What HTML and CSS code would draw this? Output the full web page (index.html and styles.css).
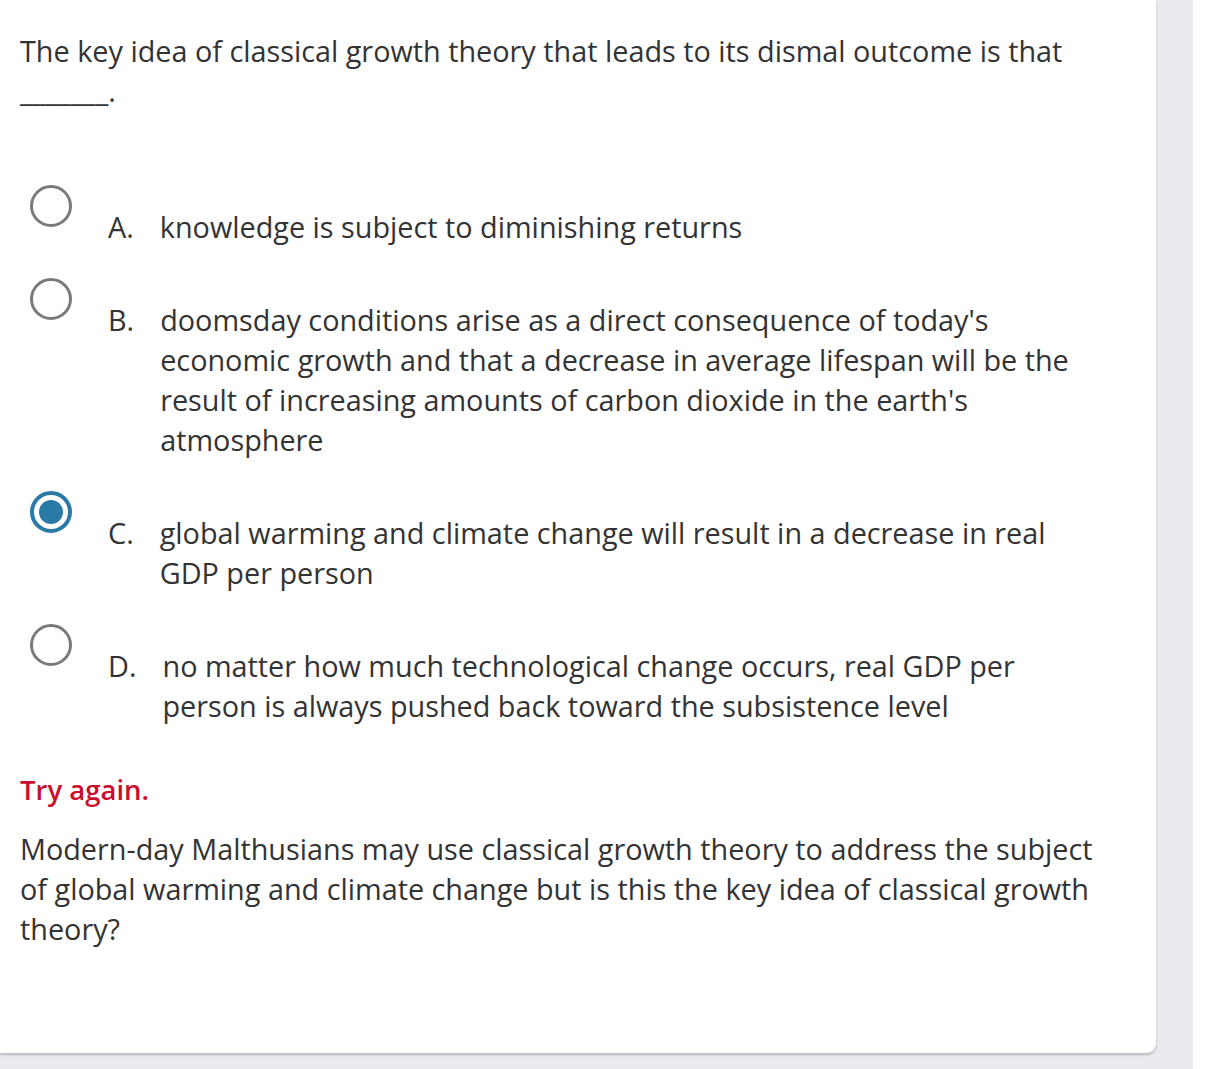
FILE: index.html
```html
<!DOCTYPE html>
<html lang="en">
<head>
<meta charset="utf-8">
<title>Question</title>
<link rel="stylesheet" href="styles.css">
</head>
<body>
<div class="page">
  <main class="card">
    <p class="question">The key idea of classical growth theory that leads to its dismal outcome is that _______.</p>
    <ul class="options">
      <li class="option">
        <span class="radio"></span>
        <div class="answer"><span class="letter">A.</span><span class="text">knowledge is subject to diminishing returns</span></div>
      </li>
      <li class="option">
        <span class="radio"></span>
        <div class="answer"><span class="letter">B.</span><span class="text">doomsday conditions arise as a direct consequence of today's economic growth and that a decrease in average lifespan will be the result of increasing amounts of carbon dioxide in the earth's atmosphere</span></div>
      </li>
      <li class="option">
        <span class="radio selected"></span>
        <div class="answer"><span class="letter">C.</span><span class="text">global warming and climate change will result in a decrease in real GDP per person</span></div>
      </li>
      <li class="option">
        <span class="radio"></span>
        <div class="answer"><span class="letter">D.</span><span class="text">no matter how much technological change occurs, real GDP per person is always pushed back toward the subsistence level</span></div>
      </li>
    </ul>
    <p class="verdict">Try again.</p>
    <p class="feedback">Modern-day Malthusians may use classical growth theory to address the subject of global warming and climate change but is this the key idea of classical growth theory?</p>
  </main>
</div>
</body>
</html>
```
FILE: styles.css
```css
html, body {
  margin: 0;
  padding: 0;
  background: #ffffff;
}
body {
  font-family: "Open Sans", "Liberation Sans", sans-serif;
  color: #333333;
  font-size: 28.8px;
  line-height: 40px;
}
.page {
  width: 1193px;
  height: 1069px;
  background: #eaebef;
  overflow: hidden;
}
.card {
  width: 1156px;
  box-sizing: border-box;
  background: #ffffff;
  padding: 31px 52px 104px 20px;
  border-bottom-right-radius: 9px;
  box-shadow: 0 2px 3px rgba(0, 0, 0, 0.22);
}
.question {
  margin: 0 0 74px 0;
}
.options {
  list-style: none;
  margin: 0;
  padding: 0;
}
.option {
  display: flex;
  align-items: flex-start;
  margin-bottom: 31px;
}
.option:last-child {
  margin-bottom: 0;
}
.radio {
  flex: none;
  width: 42px;
  height: 42px;
  box-sizing: border-box;
  border: 3px solid #7a7a7a;
  border-radius: 50%;
  margin-left: 10px;
  margin-right: 36px;
  position: relative;
}
.radio.selected {
  border: 4px solid #2a7aa6;
}
.radio.selected::after {
  content: "";
  position: absolute;
  left: 5px;
  top: 5px;
  width: 24px;
  height: 24px;
  border-radius: 50%;
  background: #2a7aa6;
}
.answer {
  display: flex;
  padding-top: 22px;
}
.letter {
  flex: none;
  margin-right: 26px;
}
.verdict {
  margin: 44px 0 19px 0;
  color: #c8102e;
  font-weight: 600;
  font-size: 27.5px;
}
.feedback {
  margin: 0;
}
```
